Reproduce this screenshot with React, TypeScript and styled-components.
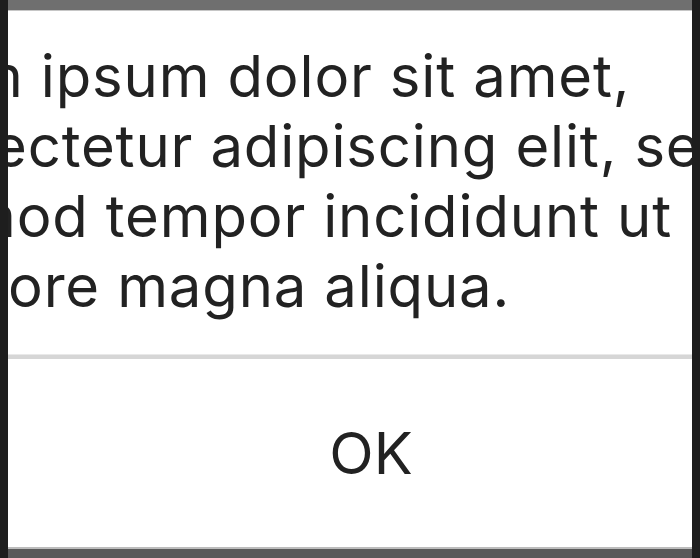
import React from 'react'
import styled, { createGlobalStyle } from 'styled-components'

const GlobalStyle = createGlobalStyle`
  html,
  body {
    margin: 0;
    padding: 0;
    background: #1e1e1e;
  }

  body {
    font-family: Inter, 'Noto Sans', sans-serif;
  }
`

const Frame = styled.div`
  width: 700px;
  height: 558px;
  box-sizing: border-box;
  padding: 0 8px;
  display: flex;
  flex-direction: column;
  background: #1e1e1e;
`

const TopBand = styled.div`
  height: 10px;
  flex-shrink: 0;
  background: #6f6f6f;
  border-bottom: 1px solid #c6c6c6;
`

const BottomBand = styled.div`
  height: 9px;
  flex-shrink: 0;
  background: #5a5a5a;
  border-top: 2px solid #bcbcbc;
`

const Dialog = styled.div`
  flex: 1;
  display: flex;
  flex-direction: column;
  background: #fff;
  overflow: hidden;
`

const Message = styled.div`
  padding-top: 30px;
  margin-bottom: 33px;
`

const Line = styled.div<{ $indent: number }>`
  margin-left: ${(props) => props.$indent}px;
  font-size: 58px;
  line-height: 70px;
  letter-spacing: 0.85px;
  white-space: nowrap;
  color: #222;
`

const Divider = styled.div`
  height: 4px;
  flex-shrink: 0;
  background: #d6d6d6;
  border-top: 1px solid #e9e9e9;
`

const Button = styled.button`
  flex: 1;
  display: flex;
  align-items: center;
  justify-content: center;
  padding: 0 0 0 42px;
  border: none;
  background: transparent;
  font-family: inherit;
  font-size: 58px;
  color: #222;
  cursor: pointer;
`

const lines = [
  { text: 'm ipsum dolor sit amet,', indent: -36 },
  { text: 'ectetur adipiscing elit, sed', indent: -15 },
  { text: 'mod tempor incididunt ut', indent: -43 },
  { text: 'ore magna aliqua.', indent: 0 },
]

const App: React.FC = () => {
  return (
    <>
      <GlobalStyle />
      <Frame>
        <TopBand />
        <Dialog>
          <Message>
            {lines.map((line) => (
              <Line key={line.text} $indent={line.indent}>
                {line.text}
              </Line>
            ))}
          </Message>
          <Divider />
          <Button>OK</Button>
        </Dialog>
        <BottomBand />
      </Frame>
    </>
  )
}

export default App
